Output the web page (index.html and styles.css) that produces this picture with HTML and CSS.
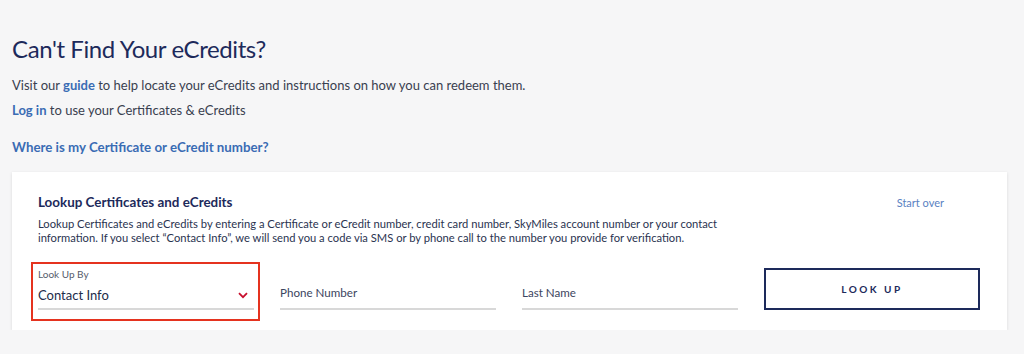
FILE: index.html
```html
<!DOCTYPE html>
<html lang="en">
<head>
  <meta charset="UTF-8">
  <meta name="viewport" content="width=device-width, initial-scale=1.0">
  <title>Can't Find Your eCredits?</title>
  <link rel="stylesheet" href="styles.css">
</head>
<body>
  <h1>Can't Find Your eCredits?</h1>
  <p class="intro">Visit our <a href="#">guide</a> to help locate your eCredits and instructions on how you can redeem them.</p>
  <p class="intro"><a href="#">Log in</a> to use your Certificates &amp; eCredits</p>
  <p class="where"><a href="#">Where is my Certificate or eCredit number?</a></p>

  <div class="card">
    <div class="card-head">
      <h2>Lookup Certificates and eCredits</h2>
      <a href="#" class="start-over">Start over</a>
    </div>
    <p class="desc">Lookup Certificates and eCredits by entering a Certificate or eCredit number, credit card number, SkyMiles account number or your contact information. If you select “Contact Info”, we will send you a code via SMS or by phone call to the number you provide for verification.</p>

    <div class="fields">
      <div class="field select highlight">
        <span class="label">Look Up By</span>
        <span class="value">Contact Info</span>
        <svg class="chevron" width="10" height="7" viewBox="0 0 10 7"><path d="M1 1.2 L5 5.2 L9 1.2" fill="none" stroke="#c8102e" stroke-width="1.8"/></svg>
      </div>
      <div class="field">
        <span class="placeholder">Phone Number</span>
      </div>
      <div class="field">
        <span class="placeholder">Last Name</span>
      </div>
      <button class="lookup">LOOK UP</button>
    </div>
  </div>
</body>
</html>
```

FILE: styles.css
```css
body {
  font-family: Lato, "Open Sans", sans-serif;
  background: #f6f6f7;
  color: #39404f;
  margin: 0;
  padding: 35px 17px 0 12px;
}
a {
  color: #3a6cb4;
  font-weight: bold;
  text-decoration: none;
}
h1 {
  font-size: 24px;
  letter-spacing: -0.4px;
  font-weight: normal;
  color: #1d2a5b;
  margin: 0 0 14px;
  line-height: 28px;
}
.intro {
  font-size: 13px;
  margin: 0 0 8px;
  line-height: 17px;
}
.where {
  font-size: 13.3px;
  line-height: 17px;
  margin: 20px 0 16px;
}
.card {
  background: #fff;
  box-shadow: 0 1px 3px rgba(0, 0, 0, 0.12);
  padding: 22px 25px 20px 26px;
}
.card-head {
  display: flex;
  justify-content: space-between;
  align-items: center;
  padding-right: 38px;
}
h2 {
  font-size: 13.4px;
  color: #1d2a5b;
  margin: 0;
  line-height: 16px;
}
.start-over {
  font-size: 11px;
  font-weight: normal;
  color: #5a82c2;
}
.desc {
  font-size: 11.2px;
  line-height: 14px;
  color: #2a3350;
  max-width: 690px;
  margin: 7px 0 23px;
}
.fields {
  display: grid;
  grid-template-columns: repeat(4, 216px);
  column-gap: 26px;
  align-items: end;
}
.field {
  position: relative;
  height: 41px;
  border-bottom: 2px solid #d8d8d8;
  display: flex;
  flex-direction: column;
  justify-content: flex-end;
  padding-bottom: 5px;
  box-sizing: border-box;
}
.label {
  font-size: 10px;
  color: #555c6c;
  line-height: 12px;
  margin-bottom: 7px;
}
.value {
  font-size: 13px;
  color: #222c4a;
  line-height: 16px;
}
.placeholder {
  font-size: 11.6px;
  color: #3c4560;
  line-height: 15px;
  margin-bottom: 3px;
}
.chevron {
  position: absolute;
  right: 6px;
  bottom: 9px;
}
.highlight::after {
  content: "";
  position: absolute;
  top: -7px;
  left: -7px;
  right: -6px;
  bottom: -13px;
  border: 2px solid #e5331f;
}
.lookup {
  height: 42px;
  background: #fff;
  border: 2px solid #1d2a5b;
  color: #1d2a5b;
  font-family: Lato, sans-serif;
  font-weight: bold;
  font-size: 10px;
  letter-spacing: 2.5px;
}
```
